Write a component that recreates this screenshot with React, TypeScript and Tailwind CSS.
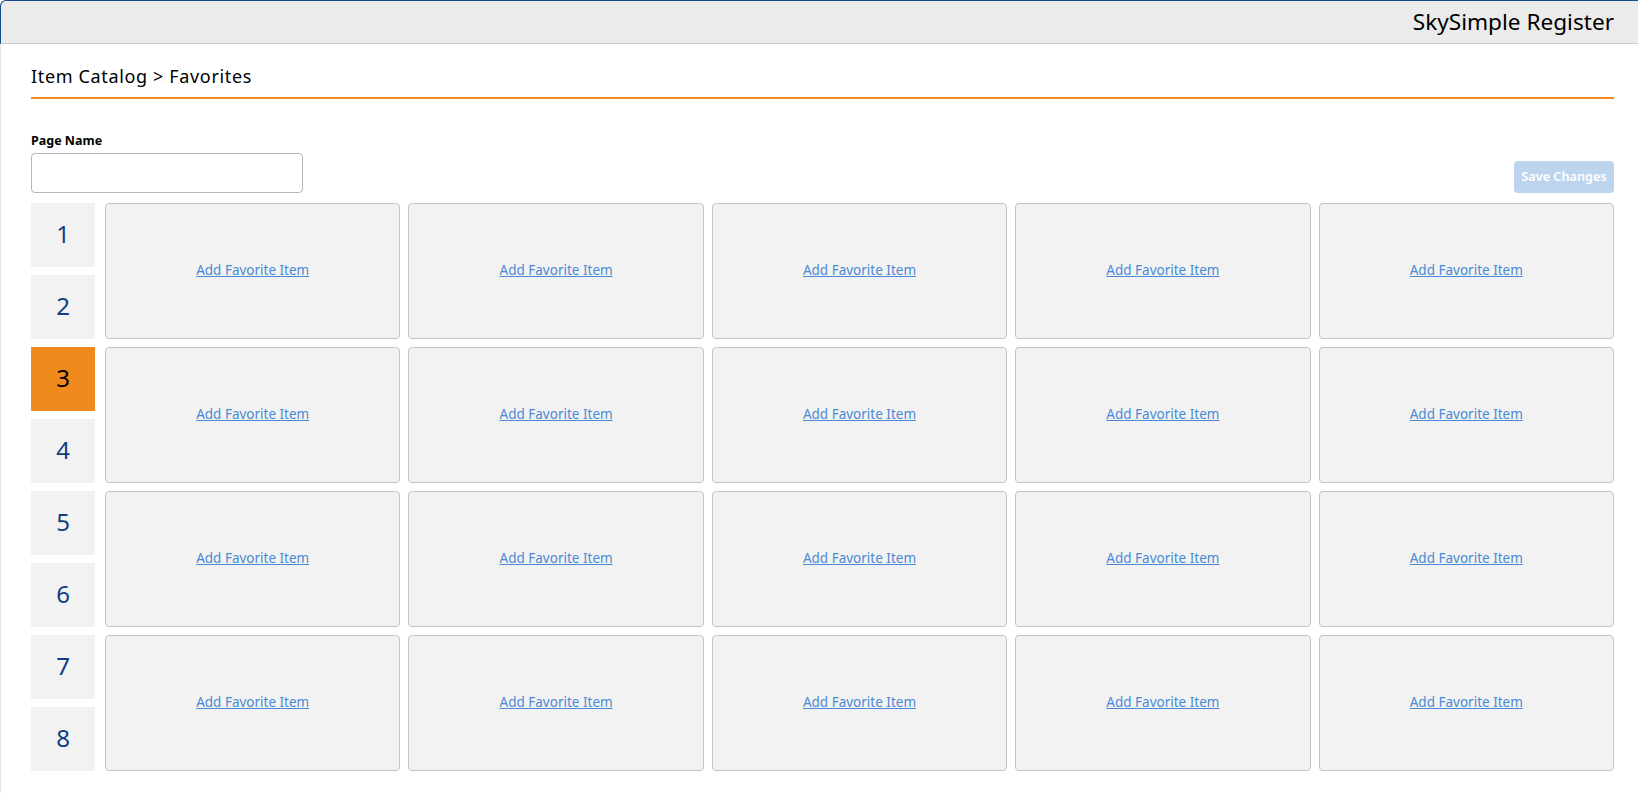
const pages = [1, 2, 3, 4, 5, 6, 7, 8]
const rows = [0, 1, 2, 3]
const cols = [0, 1, 2, 3, 4]

function PageTile({ page, active }: { page: number; active: boolean }) {
  return (
    <div
      className={
        active
          ? 'h-16 pb-[2px] flex items-center justify-center text-2xl bg-[#f08a1c] text-black'
          : 'h-16 pb-[2px] flex items-center justify-center text-2xl bg-[#f2f2f2] text-[#0f3e82]'
      }
    >
      {page}
    </div>
  )
}

function FavoriteCard() {
  return (
    <div className="h-[136px] pb-[2px] flex items-center justify-center rounded border border-[#c4c4c4] bg-[#f2f2f2]">
      <a href="#" className="text-[13.5px] text-[#4a8ad4] underline">
        Add Favorite Item
      </a>
    </div>
  )
}

export default function App() {
  return (
    <div className="min-h-[793px] bg-white text-black font-['Noto_Sans',sans-serif]">
      {/* Header */}
      <div className="h-11 flex items-center justify-end pr-6 rounded-tl-md border-t border-l border-b border-t-[#134a8e] border-l-[#134a8e] border-b-[#cccccc] bg-[#ebebeb]">
        <div className="text-[22.6px]">SkySimple Register</div>
      </div>

      <div className="h-[749px] pl-[30px] pr-6 border-l border-[#e8e8e8]">
        {/* Breadcrumb */}
        <div className="h-[55px] pt-[18px] border-b-2 border-[#f08a1c] text-lg tracking-[0.65px]">
          Item Catalog &gt; Favorites
        </div>

        {/* Page name and save */}
        <div className="mt-[30px] flex items-end justify-between">
          <div>
            <label className="block h-[24px] pt-[3px] text-[12.5px] font-bold">Page Name</label>
            <input className="block w-[272px] h-10 rounded border border-[#b8b8b8] bg-white" />
          </div>
          <button className="w-[100px] h-8 rounded bg-[#bdd4ee] text-[12.7px] font-semibold text-white">Save Changes</button>
        </div>

        {/* Favorites grid */}
        <div className="mt-[10px] flex gap-[10px]">
          <div className="w-16 shrink-0 grid gap-2">
            {pages.map((page) => (
              <PageTile key={page} page={page} active={page === 3} />
            ))}
          </div>
          <div className="flex-1 grid gap-2">
            {rows.map((row) => (
              <div key={row} className="grid grid-cols-5 gap-2">
                {cols.map((col) => (
                  <FavoriteCard key={col} />
                ))}
              </div>
            ))}
          </div>
        </div>
      </div>
    </div>
  )
}
